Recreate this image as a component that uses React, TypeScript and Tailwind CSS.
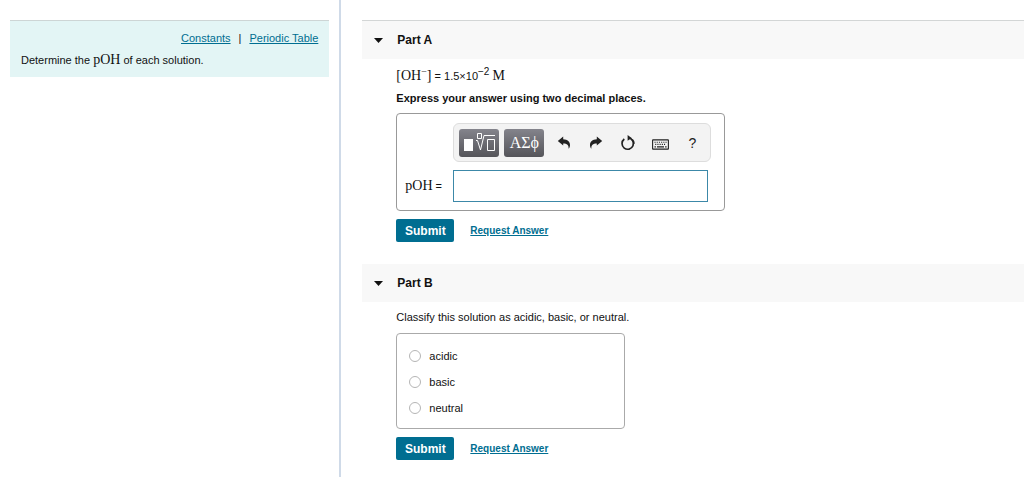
import { useState } from "react";
import type { ReactNode } from "react";

const CHOICES = ["acidic", "basic", "neutral"];

function MathText({ children }: { children: ReactNode }) {
  return <span className="font-['Liberation_Serif',serif] text-sm leading-4">{children}</span>;
}

function UndoIcon({ flip = false }: { flip?: boolean }) {
  return (
    <svg viewBox="0 0 14 14" className={`size-3.5 ${flip ? "-scale-x-100" : ""}`} fill="currentColor" aria-hidden="true">
      <path d="M.8 5 6.2.6v2.6c4.4.1 6.8 2.4 6.8 5.7 0 1.5-.4 2.7-1.4 3.8.3-3.6-1.5-5.2-5.4-5.2v2.1z" />
    </svg>
  );
}

function ResetIcon() {
  return (
    <svg viewBox="0 0 16 16" className="size-4" fill="none" aria-hidden="true">
      <path d="M8.5 2.9A5.7 5.7 0 1 1 4.3 4M12.3 4.6a5.7 5.7 0 0 1 1.7 4.1" stroke="currentColor" strokeWidth="1.7" />
      <path d="M7.6 0 11.6 3 7.6 5.8z" fill="currentColor" />
    </svg>
  );
}

function KeyboardIcon() {
  return (
    <svg viewBox="0 0 17 11" className="mt-0.5 h-[11px] w-[17px]" fill="none" stroke="currentColor" aria-hidden="true">
      <rect x=".6" y=".9" width="15.8" height="9.2" rx=".4" strokeWidth="1.1" />
      <path d="M2.5 3.2h12.2M3.2 5.4h11" strokeWidth="1.1" strokeDasharray="1.1 1.1" />
      <path d="M2.5 7.9h1.4M5 7.9h7M13.1 7.9h1.5" strokeWidth="1.1" />
    </svg>
  );
}

function TemplateIcon() {
  return (
    <svg viewBox="0 0 32 22" className="h-[22px] w-8" fill="none" stroke="white" aria-hidden="true">
      <path d="M1 7h9v12H1z" fill="white" stroke="none" />
      <path d="M14.5 1.5h4v5h-4z" />
      <path d="M13 8.5h1.5L17.5 18 21 3.5h12" />
      <path d="M24.5 7.5h7v11h-7z" />
    </svg>
  );
}

function ToolButton({ label, children }: { label: string; children: ReactNode }) {
  return (
    <button type="button" aria-label={label} className="flex h-7 w-8 items-center justify-center text-[#222]">
      {children}
    </button>
  );
}

function DarkButton({ label, children }: { label: string; children: ReactNode }) {
  return (
    <button
      type="button"
      aria-label={label}
      className="flex h-7 w-10 items-center justify-center rounded-[3px] bg-linear-to-b from-[#84848c] to-[#55555a] text-white"
    >
      {children}
    </button>
  );
}

function PartHeader({ title, className = "" }: { title: string; className?: string }) {
  return (
    <h2 className={`bg-[#f8f8f8] text-xs font-bold ${className}`}>
      <button type="button" className="flex h-[38px] w-full items-center gap-3.5 px-3 text-left">
        <svg viewBox="0 0 9 5" className="h-[5px] w-[9px]" fill="currentColor" aria-hidden="true">
          <path d="M0 0h9L4.5 5z" />
        </svg>
        {title}
      </button>
    </h2>
  );
}

function Actions() {
  return (
    <div className="mt-2 flex items-center gap-4">
      <button type="submit" className="h-[23px] w-[58px] rounded-xs bg-[#006e91] text-xs font-bold text-white">
        Submit
      </button>
      <a href="#answer" className="text-[10px] leading-4 font-bold text-[#006e91] underline">Request Answer</a>
    </div>
  );
}

export default function App() {
  const [answer, setAnswer] = useState("");
  const [choice, setChoice] = useState("");

  return (
    <div className="flex min-h-screen bg-white font-['Liberation_Sans',Arial,sans-serif] text-[11px] leading-4 text-[#111]">
      <aside className="w-1/3 shrink-0 border-r-2 border-[#cfdae8] px-2.5 py-5">
        <div className="border-t border-[#cdd5d5] bg-[#e3f5f5] px-[11px] py-[9px]">
          <nav className="flex justify-end gap-2">
            <a href="#constants" className="text-[#006e91] underline">Constants</a>
            <span>|</span>
            <a href="#periodic-table" className="text-[#006e91] underline">Periodic Table</a>
          </nav>
          <p className="mt-1.5">
            Determine the <MathText>pOH</MathText> of each solution.
          </p>
        </div>
      </aside>

      <main className="min-w-0 flex-1 pt-5 pl-[21px]">
        <section>
          <PartHeader title="Part A" className="border-t border-[#d3d6d6]" />
          <form className="pt-2 pl-[34px]" onSubmit={(e) => e.preventDefault()}>
            <p className="leading-[18px]">
              <MathText>
                [OH<sup className="text-[10px]">−</sup>]
              </MathText>{" "}
              = 1.5×10<sup className="text-[10px]">−2</sup> <MathText>M</MathText>
            </p>
            <p className="mt-[5px] font-bold">Express your answer using two decimal places.</p>
            <div className="mt-[7px] w-full max-w-[329px] rounded-sm border border-[#999] pt-[9px] pr-[13px] pb-2 pl-2">
              <div className="ml-12 flex items-center rounded-md border border-[#ddd] bg-[#f3f3f3] px-[5px] pt-[5px] pb-1">
                <div className="flex gap-[5px]">
                  <DarkButton label="Templates"><TemplateIcon /></DarkButton>
                  <DarkButton label="Symbols">
                    <span className="font-['Liberation_Serif',serif] text-base leading-4">ΑΣϕ</span>
                  </DarkButton>
                </div>
                <div className="ml-1 flex">
                  <ToolButton label="Undo"><UndoIcon /></ToolButton>
                  <ToolButton label="Redo"><UndoIcon flip /></ToolButton>
                  <ToolButton label="Reset"><ResetIcon /></ToolButton>
                  <ToolButton label="Keyboard shortcuts"><KeyboardIcon /></ToolButton>
                  <ToolButton label="Help"><span className="text-sm">?</span></ToolButton>
                </div>
              </div>
              <div className="mt-2 flex items-center pr-[3px]">
                <label htmlFor="poh" className="w-12 shrink-0">
                  <MathText>pOH</MathText> =
                </label>
                <input
                  id="poh"
                  value={answer}
                  onChange={(e) => setAnswer(e.target.value)}
                  className="h-8 min-w-0 flex-1 border border-[#3c88a8] bg-white px-2 text-sm outline-none"
                />
              </div>
            </div>
            <Actions />
          </form>
        </section>

        <section className="mt-[22px]">
          <PartHeader title="Part B" />
          <form className="pt-[7px] pb-4 pl-[34px]" onSubmit={(e) => e.preventDefault()}>
            <fieldset>
              <legend>Classify this solution as acidic, basic, or neutral.</legend>
              <div className="mt-2 flex w-full max-w-[229px] flex-col gap-2.5 rounded-sm border border-[#aaa] px-3 pt-3.5 pb-3">
                {CHOICES.map((c) => (
                  <label key={c} className="flex items-center gap-2">
                    <input
                      type="radio"
                      name="classification"
                      value={c}
                      checked={choice === c}
                      onChange={() => setChoice(c)}
                      className="size-3 appearance-none rounded-full border border-[#b5b5b5] bg-white checked:border-4 checked:border-[#006e91]"
                    />
                    {c}
                  </label>
                ))}
              </div>
            </fieldset>
            <Actions />
          </form>
        </section>
      </main>
    </div>
  );
}
